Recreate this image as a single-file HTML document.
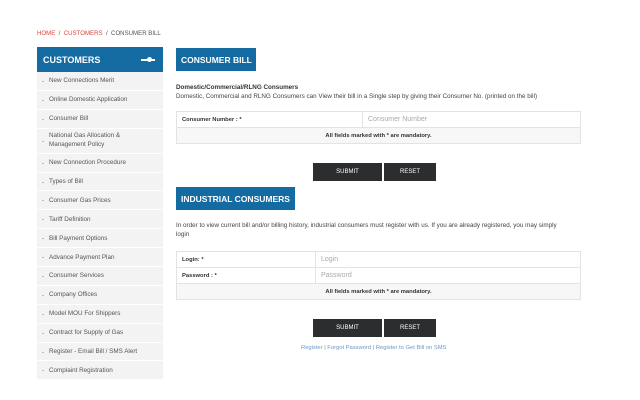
<!DOCTYPE html>
<html><head><meta charset="utf-8"><style>
*{margin:0;padding:0;box-sizing:border-box}
body{width:640px;height:400px;background:#fff;font-family:"Liberation Sans",sans-serif;position:relative;overflow:hidden;color:#444}
.a{position:absolute}
.bc{left:37px;top:30px;font-size:6.1px;color:#555}
.bc span{color:#d9473f}
.side{left:37px;top:47px;width:126px}
.sh{height:25px;background:#136ba1;color:#fff;font-weight:bold;font-size:9px;padding:8px 0 0 6px;position:relative}
.sh i{position:absolute;right:8px;top:12px;width:14px;height:1.5px;background:#fff}
.sh b{position:absolute;right:11px;top:10px;width:5px;height:5px;border-radius:50%;background:#fff}
.it{background:#f3f3f3;border-bottom:1.5px solid #fff;height:18.9px;font-size:6.3px;color:#555;padding:0 0 0 12px;display:flex;align-items:center;position:relative}
.it:before{content:"";position:absolute;left:5px;top:50%;width:2px;height:1px;background:#bbb}
.it.t{height:25px;line-height:8.5px}
.hd{background:#136ba1;color:#fff;font-weight:bold;font-size:8.5px;height:23px;padding:7px 0 0 5px}
.tx{font-size:6.3px;color:#444;line-height:8.8px}
table{border-collapse:collapse;font-size:5.8px}
td{border:1px solid #e3e3e3;height:16px;padding:0 5px}
td.l{font-weight:bold;color:#333}
td.p{color:#aaa;font-size:7px}
td.m{background:#f7f7f7;text-align:center;font-weight:bold;color:#333}
.btn{background:#2b2d2f;color:#fff;font-size:6px;text-align:center;height:18px;line-height:18px}
.lk{font-size:5.8px;color:#6d97c4}
</style></head><body>
<div class="a bc"><span>HOME</span> &nbsp;/&nbsp; <span>CUSTOMERS</span> &nbsp;/&nbsp; CONSUMER BILL</div>
<div class="a side">
<div class="sh">CUSTOMERS<i></i><b></b></div>
<div class="it">New Connections Merit</div>
<div class="it">Online Domestic Application</div>
<div class="it">Consumer Bill</div>
<div class="it t">National Gas Allocation &amp;<br>Management Policy</div>
<div class="it">New Connection Procedure</div>
<div class="it">Types of Bill</div>
<div class="it">Consumer Gas Prices</div>
<div class="it">Tariff Definition</div>
<div class="it">Bill Payment Options</div>
<div class="it">Advance Payment Plan</div>
<div class="it">Consumer Services</div>
<div class="it">Company Offices</div>
<div class="it">Model MOU For Shippers</div>
<div class="it">Contract for Supply of Gas</div>
<div class="it">Register - Email Bill / SMS Alert</div>
<div class="it">Complaint Registration</div>
</div>
<div class="a hd" style="left:176px;top:48px;width:80px">CONSUMER BILL</div>
<div class="a tx" style="left:176px;top:84px;width:420px"><b style="color:#333">Domestic/Commercial/RLNG Consumers</b><br>Domestic, Commercial and RLNG Consumers can View their bill in a Single step by giving their Consumer No. (printed on the bill)</div>
<table class="a" style="left:176px;top:111px;width:405px">
<tr><td class="l" style="width:186px">Consumer Number : *</td><td class="p">Consumer Number</td></tr>
<tr><td class="m" colspan="2">All fields marked with * are mandatory.</td></tr></table>
<div class="a btn" style="left:313px;top:163px;width:69px">SUBMIT</div>
<div class="a btn" style="left:384px;top:163px;width:52px">RESET</div>
<div class="a hd" style="left:176px;top:187px;width:119px">INDUSTRIAL CONSUMERS</div>
<div class="a tx" style="left:176px;top:222px;width:420px">In order to view current bill and/or billing history, industrial consumers must register with us. If you are already registered, you may simply<br>login</div>
<table class="a" style="left:176px;top:251px;width:405px">
<tr><td class="l" style="width:139px">Login: *</td><td class="p">Login</td></tr>
<tr><td class="l">Password : *</td><td class="p">Password</td></tr>
<tr><td class="m" colspan="2">All fields marked with * are mandatory.</td></tr></table>
<div class="a btn" style="left:313px;top:319px;width:69px">SUBMIT</div>
<div class="a btn" style="left:384px;top:319px;width:52px">RESET</div>
<div class="a lk" style="left:301px;top:345px">Register | Forgot Password | Register to Get Bill on SMS</div>
</body></html>
